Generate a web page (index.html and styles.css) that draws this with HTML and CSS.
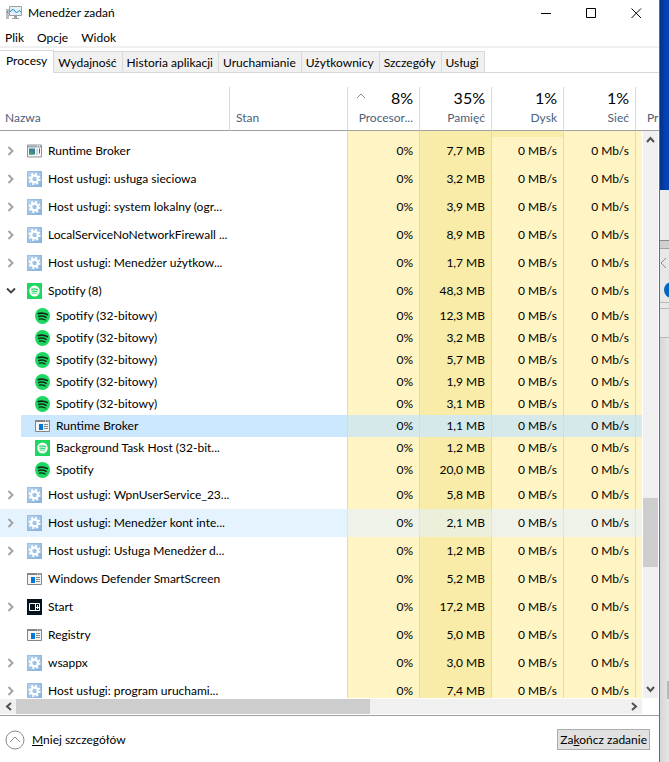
FILE: index.html
```html
<!DOCTYPE html>
<html lang="pl">
<head>
  <meta charset="UTF-8" />
  <meta name="viewport" content="width=device-width, initial-scale=1" />
  <title>Menedżer zadań</title>
  <link rel="stylesheet" href="styles.css">
</head>
<body>
  <svg class="sprite" xmlns="http://www.w3.org/2000/svg" aria-hidden="true">
    <linearGradient id="sky" x1="0" y1="0" x2="1" y2="1">
      <stop offset="0" stop-color="#b9d5ee"/><stop offset="1" stop-color="#85b2e3"/>
    </linearGradient>
    <symbol id="i-gear" viewBox="0 0 15 16">
      <path fill="url(#sky)" d="M0 0h15v16H0z"/>
      <path fill="none" stroke="#8fb0d0" stroke-opacity=".6" d="M.5.5h14v15H.5z"/>
      <circle cx="7.5" cy="8" r="3.4" fill="none" stroke="#fff" stroke-width="2.4"/>
      <circle cx="7.5" cy="8" r="5.2" fill="none" stroke="#fff" stroke-width="1.8" stroke-dasharray="2.04 2.04"/>
      <circle cx="7.5" cy="8" r="1.6" fill="#9cc0e6"/>
    </symbol>
    <symbol id="i-app" viewBox="0 0 15 12">
      <path fill="#f4f4f4" stroke="#858585" d="M.5.5h14v11H.5z"/>
      <path fill="#858585" d="M0 0h15v2H0z"/>
      <path fill="#fff" d="M10 .6h1v1h-1zM12.5.6h1v1h-1z"/>
      <path fill="#0078d7" d="M4 4h4v6H4z"/>
      <path stroke="#8a8a8a" d="M9 4.500h4M9 6.500h4M9 8.500h4"/>
    </symbol>
    <symbol id="i-broker" viewBox="0 0 15 13">
      <path fill="#f4f6f8" stroke="#8e959c" d="M.5.5h14v12H.5z"/>
      <path fill="#9fa9b2" d="M1 1h13v2H1z"/>
      <path fill="#fff" d="M10 1h1v1h-1zM12 1h1v1h-1z"/>
      <path fill="#3a7f9c" d="M2 4h6v6H2z"/>
      <path fill="#3f9d6b" d="M2 7h4v3H2z"/>
      <path stroke="#b4bac0" d="M9 5.500h2M9 7.500h2M9 9.500h2"/>
      <path stroke="#44698c" d="M12.500 4v5"/>
    </symbol>
    <symbol id="i-spotify" viewBox="0 0 15 16">
      <ellipse cx="7.500" cy="8" rx="7.500" ry="8" fill="#1ed760"/>
      <g fill="none" stroke="#10281a" stroke-linecap="round">
        <path stroke-width="1.800" d="M3.200 5.600c3-.9 6.300-.6 9 .9"/>
        <path stroke-width="1.500" d="M3.700 8.500c2.600-.7 5.200-.4 7.500.9"/>
        <path stroke-width="1.200" d="M4.200 11.100c2.100-.5 4.200-.2 6 .8"/>
      </g>
    </symbol>
    <symbol id="i-spotify-box" viewBox="0 0 15 16">
      <path fill="#1ed760" d="M0 0h15v16H0z"/>
      <ellipse cx="7.500" cy="8" rx="5.200" ry="5.600" fill="#fff"/>
      <g fill="none" stroke="#1ed760" stroke-linecap="round">
        <path stroke-width="1.300" d="M4.600 6.300c2-.6 4.200-.4 6 .6"/>
        <path stroke-width="1.100" d="M4.900 8.300c1.800-.4 3.600-.2 5.100.6"/>
        <path stroke-width="1" d="M5.200 10.200c1.400-.3 2.800-.2 4 .5"/>
      </g>
    </symbol>
    <symbol id="i-start" viewBox="0 0 15 16">
      <path fill="#04121f" d="M0 0h15v16H0z"/>
      <path fill="none" stroke="#fff" d="M2.500 4.500h10v7h-10z"/>
      <path fill="#fff" d="M8 5h1v7H8zM10 6h1v2h-1zM10 9h1v1h-1zM9 8h3v1H9z"/>
    </symbol>
    <symbol id="i-right" viewBox="0 0 8 10">
      <path fill="none" stroke="#a0a0a0" stroke-width="1.800" d="M1.500 1l4 4-4 4"/>
    </symbol>
    <symbol id="i-down" viewBox="0 0 10 8">
      <path fill="none" stroke="#404040" stroke-width="1.800" d="M1 1.500l4 4 4-4"/>
    </symbol>
  </svg>

  <div class="window">
    <header class="titlebar">
      <svg class="logo" width="16" height="14" viewBox="0 0 16 14">
        <path fill="#b8bcbf" d="M0 3h3v10H0z"/>
        <path fill="#4db04a" d="M1 5h1v2H1z"/>
        <path fill="#e4f3fb" stroke="#9aa0a4" d="M3.500.5h12v9h-12z"/>
        <path fill="none" stroke="#1c87c4" d="M4 6l2-2.500L8 4l2.500 3L13 4.500l2 1.500"/>
        <path fill="#9aa0a4" d="M8 10h3v2H8zM6 12h7v1H6z"/>
      </svg>
      <h1>Menedżer zadań</h1>
      <button class="win-btn" aria-label="Minimalizuj"><svg width="11" height="11"><path d="M0 5.500h10"/></svg></button>
      <button class="win-btn" aria-label="Maksymalizuj"><svg width="11" height="11"><path d="M.5.5h9v9h-9z"/></svg></button>
      <button class="win-btn" aria-label="Zamknij"><svg width="11" height="11"><path d="M.5.5l9.500 9.500M10 .5L.5 10"/></svg></button>
    </header>

    <nav class="menu">
      <button>Plik</button>
      <button>Opcje</button>
      <button>Widok</button>
    </nav>

    <div class="tabs" role="tablist">
      <button class="tab active" role="tab" aria-selected="true">Procesy</button>
      <button class="tab" role="tab">Wydajność</button>
      <button class="tab" role="tab">Historia aplikacji</button>
      <button class="tab" role="tab">Uruchamianie</button>
      <button class="tab" role="tab">Użytkownicy</button>
      <button class="tab" role="tab">Szczegóły</button>
      <button class="tab" role="tab">Usługi</button>
    </div>

    <main class="pane">
      <table class="processes">
        <colgroup>
          <col><col class="c-state"><col class="c-num"><col class="c-num"><col class="c-num"><col class="c-num"><col class="c-last">
        </colgroup>
        <thead>
          <tr>
            <th>Nazwa</th>
            <th>Stan</th>
            <th class="num"><div class="total"><svg class="sort" width="10" height="6"><path d="M1 5l4-4 4 4"/></svg>8%</div>Procesor...</th>
            <th class="num"><div class="total">35%</div>Pamięć</th>
            <th class="num"><div class="total">1%</div>Dysk</th>
            <th class="num"><div class="total">1%</div>Sieć</th>
            <th>Pr</th>
          </tr>
        </thead>
        <tbody>
          <tr class="cut"><td></td><td></td><td></td><td></td><td class="warm"></td><td></td><td></td></tr>
          <tr><td><div class="name"><button class="exp" aria-label="Rozwiń"><svg width="8" height="10"><use href="#i-right"/></svg></button><svg class="icon"><use href="#i-broker"/></svg>Runtime Broker</div></td><td></td><td>0%</td><td>7,7 MB</td><td>0 MB/s</td><td>0 Mb/s</td><td></td></tr>
          <tr><td><div class="name"><button class="exp" aria-label="Rozwiń"><svg width="8" height="10"><use href="#i-right"/></svg></button><svg class="icon"><use href="#i-gear"/></svg>Host usługi: usługa sieciowa</div></td><td></td><td>0%</td><td>3,2 MB</td><td>0 MB/s</td><td>0 Mb/s</td><td></td></tr>
          <tr><td><div class="name"><button class="exp" aria-label="Rozwiń"><svg width="8" height="10"><use href="#i-right"/></svg></button><svg class="icon"><use href="#i-gear"/></svg>Host usługi: system lokalny (ogr...</div></td><td></td><td>0%</td><td>3,9 MB</td><td>0 MB/s</td><td>0 Mb/s</td><td></td></tr>
          <tr><td><div class="name"><button class="exp" aria-label="Rozwiń"><svg width="8" height="10"><use href="#i-right"/></svg></button><svg class="icon"><use href="#i-gear"/></svg>LocalServiceNoNetworkFirewall ...</div></td><td></td><td>0%</td><td>8,9 MB</td><td>0 MB/s</td><td>0 Mb/s</td><td></td></tr>
          <tr><td><div class="name"><button class="exp" aria-label="Rozwiń"><svg width="8" height="10"><use href="#i-right"/></svg></button><svg class="icon"><use href="#i-gear"/></svg>Host usługi: Menedżer użytkow...</div></td><td></td><td>0%</td><td>1,7 MB</td><td>0 MB/s</td><td>0 Mb/s</td><td></td></tr>
          <tr><td><div class="name"><button class="exp" aria-label="Zwiń"><svg width="10" height="8"><use href="#i-down"/></svg></button><svg class="icon"><use href="#i-spotify-box"/></svg>Spotify (8)</div></td><td></td><td>0%</td><td>48,3 MB</td><td>0 MB/s</td><td>0 Mb/s</td><td></td></tr>

          <tr class="child"><td><div class="name"><svg class="icon"><use href="#i-spotify"/></svg>Spotify (32-bitowy)</div></td><td></td><td>0%</td><td>12,3 MB</td><td>0 MB/s</td><td>0 Mb/s</td><td></td></tr>
          <tr class="child"><td><div class="name"><svg class="icon"><use href="#i-spotify"/></svg>Spotify (32-bitowy)</div></td><td></td><td>0%</td><td>3,2 MB</td><td>0 MB/s</td><td>0 Mb/s</td><td></td></tr>
          <tr class="child"><td><div class="name"><svg class="icon"><use href="#i-spotify"/></svg>Spotify (32-bitowy)</div></td><td></td><td>0%</td><td>5,7 MB</td><td>0 MB/s</td><td>0 Mb/s</td><td></td></tr>
          <tr class="child"><td><div class="name"><svg class="icon"><use href="#i-spotify"/></svg>Spotify (32-bitowy)</div></td><td></td><td>0%</td><td>1,9 MB</td><td>0 MB/s</td><td>0 Mb/s</td><td></td></tr>
          <tr class="child"><td><div class="name"><svg class="icon"><use href="#i-spotify"/></svg>Spotify (32-bitowy)</div></td><td></td><td>0%</td><td>3,1 MB</td><td>0 MB/s</td><td>0 Mb/s</td><td></td></tr>
          <tr class="child selected"><td><div class="name"><svg class="icon"><use href="#i-app"/></svg>Runtime Broker</div></td><td></td><td>0%</td><td>1,1 MB</td><td>0 MB/s</td><td>0 Mb/s</td><td></td></tr>
          <tr class="child"><td><div class="name"><svg class="icon"><use href="#i-spotify-box"/></svg>Background Task Host (32-bit...</div></td><td></td><td>0%</td><td>1,2 MB</td><td>0 MB/s</td><td>0 Mb/s</td><td></td></tr>
          <tr class="child"><td><div class="name"><svg class="icon"><use href="#i-spotify"/></svg>Spotify</div></td><td></td><td>0%</td><td>20,0 MB</td><td>0 MB/s</td><td>0 Mb/s</td><td></td></tr>

          <tr><td><div class="name"><button class="exp" aria-label="Rozwiń"><svg width="8" height="10"><use href="#i-right"/></svg></button><svg class="icon"><use href="#i-gear"/></svg>Host usługi: WpnUserService_23...</div></td><td></td><td>0%</td><td>5,8 MB</td><td>0 MB/s</td><td>0 Mb/s</td><td></td></tr>
          <tr class="hover"><td><div class="name"><button class="exp" aria-label="Rozwiń"><svg width="8" height="10"><use href="#i-right"/></svg></button><svg class="icon"><use href="#i-gear"/></svg>Host usługi: Menedżer kont inte...</div></td><td></td><td>0%</td><td>2,1 MB</td><td>0 MB/s</td><td>0 Mb/s</td><td></td></tr>
          <tr><td><div class="name"><button class="exp" aria-label="Rozwiń"><svg width="8" height="10"><use href="#i-right"/></svg></button><svg class="icon"><use href="#i-gear"/></svg>Host usługi: Usługa Menedżer d...</div></td><td></td><td>0%</td><td>1,2 MB</td><td>0 MB/s</td><td>0 Mb/s</td><td></td></tr>
          <tr><td><div class="name"><span class="exp"></span><svg class="icon"><use href="#i-app"/></svg>Windows Defender SmartScreen</div></td><td></td><td>0%</td><td>5,2 MB</td><td>0 MB/s</td><td>0 Mb/s</td><td></td></tr>
          <tr><td><div class="name"><button class="exp" aria-label="Rozwiń"><svg width="8" height="10"><use href="#i-right"/></svg></button><svg class="icon"><use href="#i-start"/></svg>Start</div></td><td></td><td>0%</td><td>17,2 MB</td><td>0 MB/s</td><td>0 Mb/s</td><td></td></tr>
          <tr><td><div class="name"><span class="exp"></span><svg class="icon"><use href="#i-app"/></svg>Registry</div></td><td></td><td>0%</td><td>5,0 MB</td><td>0 MB/s</td><td>0 Mb/s</td><td></td></tr>
          <tr><td><div class="name"><button class="exp" aria-label="Rozwiń"><svg width="8" height="10"><use href="#i-right"/></svg></button><svg class="icon"><use href="#i-gear"/></svg>wsappx</div></td><td></td><td>0%</td><td>3,0 MB</td><td>0 MB/s</td><td>0 Mb/s</td><td></td></tr>
          <tr><td><div class="name"><button class="exp" aria-label="Rozwiń"><svg width="8" height="10"><use href="#i-right"/></svg></button><svg class="icon"><use href="#i-gear"/></svg>Host usługi: program uruchami...</div></td><td></td><td>0%</td><td>7,4 MB</td><td>0 MB/s</td><td>0 Mb/s</td><td></td></tr>
        </tbody>
      </table>

      <div class="vscroll">
        <button aria-label="W górę"><svg width="9" height="7"><path d="M1 6l3.500-4L8 6"/></svg></button>
        <div class="track"><div class="thumb"></div></div>
        <button aria-label="W dół"><svg width="9" height="7"><path d="M1 1l3.500 4L8 1"/></svg></button>
      </div>
    </main>

    <div class="hscroll">
      <button aria-label="W lewo"><svg width="7" height="9"><path d="M6 1L2 4.500 6 8"/></svg></button>
      <div class="track"><div class="thumb"></div></div>
      <button aria-label="W prawo"><svg width="7" height="9"><path d="M1 1l4 3.500L1 8"/></svg></button>
    </div>

    <footer class="footer">
      <button class="fewer">
        <svg width="20" height="20"><circle cx="10" cy="10" r="9"/><path d="M5 12l5-5 5 5"/></svg>
        <span><u>M</u>niej szczegółów</span>
      </button>
      <button class="end-task">Za<u>k</u>ończ zadanie</button>
    </footer>
  </div>

  <div class="behind">
    <div class="wallpaper"></div>
    <div class="page-top"></div>
    <div class="page-tabs"></div>
    <div class="page-nav">
      <svg width="9" height="12"><path d="M6 1L1 6l5 5"/></svg>
      <span class="dot"></span>
    </div>
    <div class="page-line"></div>
    <div class="page-bar"></div>
    <div class="page-body"><div class="page-thumb"></div></div>
  </div>
</body>
</html>
```
FILE: styles.css
```css
html, body {
  margin: 0;
  height: 100%;
  overflow: hidden;
}
body {
  display: flex;
  font-family: Lato, "Open Sans", sans-serif;
  font-size: 12px;
  line-height: 16px;
  color: #000;
  background: #e8e8e8;
}
button {
  margin: 0;
  padding: 0;
  border: 0;
  background: none;
  font: inherit;
  color: inherit;
  white-space: nowrap;
}
.sprite {
  position: absolute;
  width: 0;
  height: 0;
}
.window {
  flex: 1;
  min-width: 0;
  height: 100vh;
  display: flex;
  flex-direction: column;
  background: #fff;
  overflow: hidden;
}

/* title bar and menu */
.titlebar {
  display: flex;
  align-items: center;
  height: 26px;
  flex: none;
  padding-left: 6px;
}
.titlebar h1 {
  flex: 1;
  margin: 0 0 0 6px;
  font-size: 12px;
  font-weight: normal;
}
.win-btn {
  display: flex;
  align-items: center;
  justify-content: center;
  width: 45px;
  height: 26px;
}
.win-btn path {
  fill: none;
  stroke: #000;
}
.menu {
  display: flex;
  gap: 13px;
  height: 20px;
  flex: none;
  padding: 0 5px;
  border-bottom: 2px solid #f0f0f0;
}
.menu button {
  height: 24px;
}

/* tabs */
.tabs {
  display: flex;
  align-items: flex-end;
  height: 24px;
  flex: none;
  border-bottom: 1px solid #d9d9d9;
}
.tab {
  height: 21px;
  padding: 1px 5px 0 4px;
  background: #f0f0f0;
  border: 1px solid #d9d9d9;
  border-left: 0;
  border-bottom: 0;
}
.tab.active {
  height: 23px;
  margin-bottom: -1px;
  padding: 0 6px 2px;
  background: #fff;
}

/* process list, the scroll bar shares its grid cell */
.pane {
  display: grid;
  grid-template: minmax(0, 1fr) / minmax(0, 1fr);
  flex: 1;
  min-height: 0;
  margin-top: 14px;
  overflow: hidden;
}
.processes {
  grid-area: 1 / 1;
  align-self: start;
  width: 100%;
  table-layout: fixed;
  border-collapse: separate;
  border-spacing: 0;
}
.c-state { width: 118px; }
.c-num { width: 72px; }
.c-last { width: 24px; }
.processes th {
  height: 44px;
  box-sizing: border-box;
  padding: 0 0 4px 6px;
  border-bottom: 1px solid #a0a0a0;
  border-left: 1px solid #d9d9d9;
  font-weight: normal;
  text-align: left;
  vertical-align: bottom;
  color: #4c607a;
  white-space: nowrap;
  overflow: hidden;
}
.processes th:first-child {
  padding-left: 5px;
  border-left: 0;
}
.processes th:last-child {
  padding-left: 11px;
}
.processes th.num {
  padding: 0 6px 4px 0;
  text-align: right;
}
.total {
  display: flex;
  align-items: center;
  justify-content: flex-end;
  height: 20px;
  margin-bottom: 2px;
  font-size: 16px;
  color: #000;
}
.sort {
  margin: 0 auto 4px 8px;
}
.sort path {
  fill: none;
  stroke: #7f8aa0;
}
.processes td {
  height: 28px;
  padding: 0 6px 0 0;
  text-align: right;
  white-space: nowrap;
  background: #fff4c4;
  border-left: 1px solid #ead9a0;
  box-sizing: border-box;
}
.processes td:nth-child(-n+2) {
  padding: 0;
  border-left: 0;
  background: #fff;
}
.processes td:nth-child(4),
.processes td.warm {
  background: #f9eca8;
}
.processes .cut td {
  height: 6px;
}
.processes .child td {
  height: 22px;
}
.processes .selected td {
  background: #d5e8ea;
  border-color: #cbdfdf;
}
.processes .selected td:nth-child(2) {
  background: #cce8ff;
}
.processes .selected td:first-child {
  background: linear-gradient(to right, #fff 21px, #cce8ff 21px);
}
.processes .hover td {
  background: #eef2e8;
  border-color: #e2e6d8;
}
.processes .hover td:nth-child(4) {
  background: #ecefda;
}
.processes .hover td:nth-child(-n+2) {
  background: #e5f3ff;
}
.name {
  display: flex;
  align-items: center;
}
.child .name {
  padding-left: 35px;
}
.exp {
  display: flex;
  align-items: center;
  justify-content: center;
  flex: none;
  width: 15px;
  height: 16px;
  margin: 0 9px 0 3px;
}
.icon {
  flex: none;
  width: 15px;
  height: 16px;
  margin-right: 6px;
}

/* scroll bars */
.vscroll {
  grid-area: 1 / 1;
  justify-self: end;
  display: flex;
  flex-direction: column;
  width: 15px;
  margin-top: 44px;
  border: solid #fff;
  border-width: 0 1px;
  background: #f0f0f0;
}
.hscroll {
  display: flex;
  flex: none;
  height: 15px;
  margin: 1px 17px 1px 0;
  background: #f0f0f0;
}
.vscroll button,
.hscroll button {
  display: flex;
  align-items: center;
  justify-content: center;
}
.vscroll button {
  height: 17px;
}
.hscroll button {
  width: 16px;
}
.vscroll path,
.hscroll path {
  fill: none;
  stroke: #505050;
  stroke-width: 2;
}
.track {
  flex: 1;
}
.thumb {
  background: #cdcdcd;
}
.vscroll .track {
  padding-top: 350px;
}
.vscroll .thumb {
  height: 69px;
}
.hscroll .thumb {
  width: 58%;
  height: 100%;
}

/* footer */
.footer {
  display: flex;
  align-items: center;
  justify-content: space-between;
  height: 47px;
  flex: none;
  padding: 1px 9px 0 5px;
  box-sizing: border-box;
  border-top: 1px solid #a0a0a0;
}
.fewer {
  display: flex;
  align-items: center;
  gap: 7px;
}
.fewer svg {
  fill: none;
  stroke: #8a8a8a;
}
.end-task {
  height: 21px;
  padding: 0 2px;
  border: 1px solid #adadad;
  background: #e1e1e1;
  line-height: 19px;
}

/* what shows past the window edge */
.behind {
  display: flex;
  flex-direction: column;
  flex: none;
  width: 9px;
  border-left: 1px solid #6a6a6a;
  overflow: hidden;
}
.wallpaper {
  height: 190px;
  background: linear-gradient(to right, #04318c, #0443b4 6px);
}
.page-top {
  height: 50px;
  background: #ececec;
  border-bottom: 1px solid #8a8a8a;
}
.page-tabs {
  height: 7px;
  background: #d0d0d0;
  border-bottom: 1px solid #a0a0a0;
}
.page-nav {
  height: 54px;
  padding-top: 8px;
  box-sizing: border-box;
  border-bottom: 1px solid #b8b8b8;
}
.page-nav svg {
  display: block;
  fill: none;
  stroke: #8a8a8a;
}
.dot {
  display: block;
  width: 16px;
  height: 16px;
  margin: 13px 0 0 4px;
  border-radius: 50%;
  background: #0067c0;
}
.page-line {
  height: 5px;
  border-bottom: 1px solid #b8b8b8;
}
.page-bar {
  height: 28px;
  border-bottom: 1px solid #b8b8b8;
}
.page-body {
  flex: 1;
  padding: 343px 0 0 7px;
  background: linear-gradient(to right, #d6d6d6, #e6e6e6);
}
.page-thumb {
  height: 18px;
  background: #b8b8b8;
}
```
